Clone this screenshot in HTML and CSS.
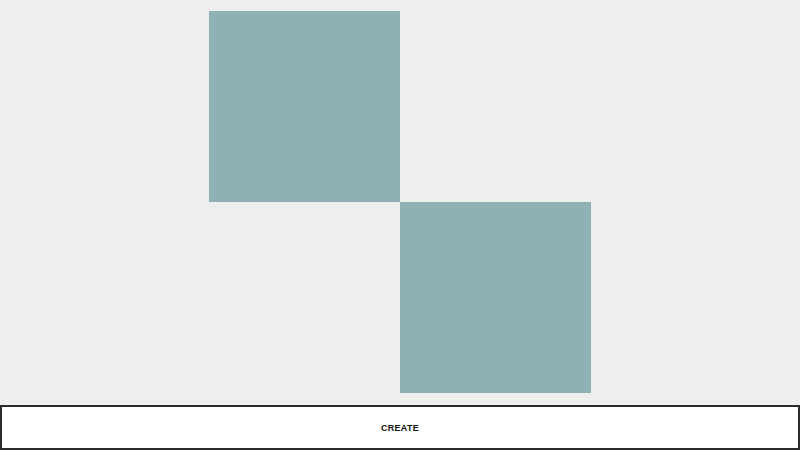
FILE: index.html
```html
<!DOCTYPE html>
<html>
<head>
<meta charset="utf-8">
<link rel="stylesheet" href="styles.css">
</head>
<body>
<div class="stage">
  <div class="board">
    <div class="tile"></div>
    <div class="empty"></div>
    <div class="empty"></div>
    <div class="tile"></div>
  </div>
</div>
<button class="create">CREATE</button>
</body>
</html>
```
FILE: styles.css
```css
html, body {
  margin: 0;
  padding: 0;
  background: #eeeeee;
  width: 800px;
  height: 450px;
  overflow: hidden;
}
.stage {
  height: 405px;
  box-sizing: border-box;
  padding-top: 11px;
  display: flex;
  justify-content: center;
}
.board {
  display: grid;
  grid-template-columns: 191px 191px;
  grid-template-rows: 191px 191px;
}
.tile {
  background: #8eb1b4;
}
.create {
  display: block;
  width: 800px;
  height: 45px;
  margin: 0;
  padding: 0;
  background: #ffffff;
  border: 2px solid #2a2a2a;
  font-family: "Liberation Sans", Arial, sans-serif;
  font-weight: bold;
  font-size: 9px;
  letter-spacing: 0.3px;
  color: #111111;
}
```
